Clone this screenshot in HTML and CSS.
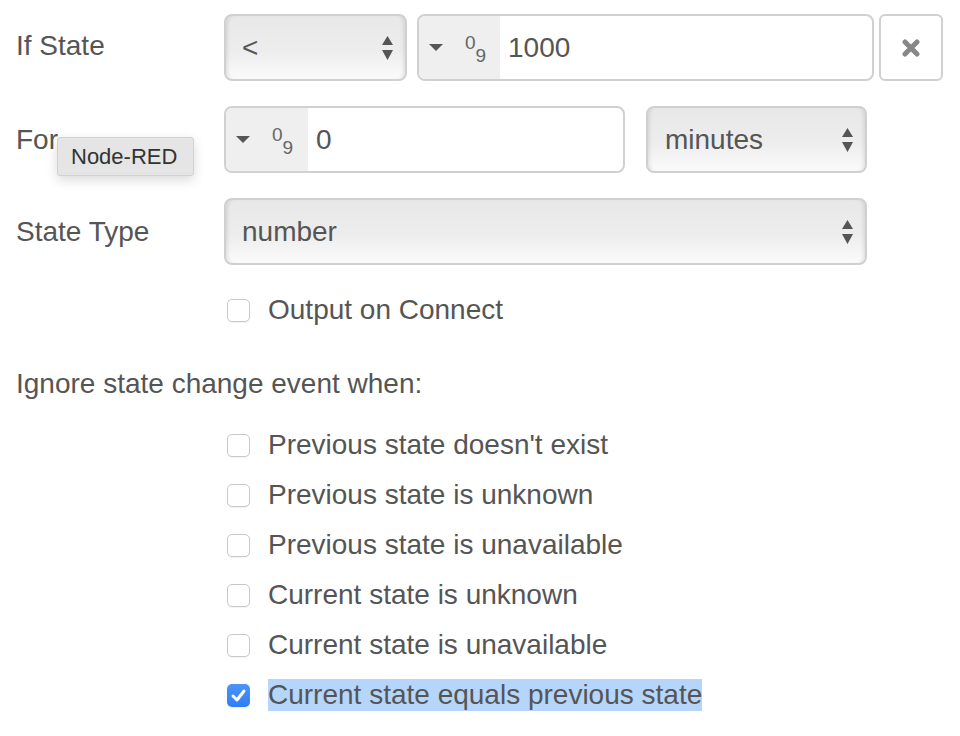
FILE: index.html
```html
<!DOCTYPE html>
<html lang="en">
<head>
    <meta charset="UTF-8">
    <title>Trigger State</title>
    <link rel="stylesheet" href="styles.css">
</head>
<body>
    <div class="form-row">
        <label class="label-if">If State</label>
        <div class="select select-op">
            <span>&lt;</span>
            <svg class="arrows" width="11" height="24" viewBox="0 0 11 24"><path d="M5.5 0 L11 9 L0 9 Z M0 14 L11 14 L5.5 24 Z"/></svg>
        </div>
        <div class="typed typed-state">
            <div class="type-btn">
                <svg class="caret" width="14" height="7" viewBox="0 0 14 7"><path d="M0 0 L14 0 L7 7 Z"/></svg>
                <span class="num-icon"><sup>0</sup><sub>9</sub></span>
            </div>
            <span class="value">1000</span>
        </div>
        <div class="remove-btn">
            <svg width="18" height="18" viewBox="0 0 18 18"><path d="M3 3 L15 15 M15 3 L3 15"/></svg>
        </div>
    </div>

    <div class="form-row">
        <label>For</label>
        <div class="typed typed-for">
            <div class="type-btn">
                <svg class="caret" width="14" height="7" viewBox="0 0 14 7"><path d="M0 0 L14 0 L7 7 Z"/></svg>
                <span class="num-icon"><sup>0</sup><sub>9</sub></span>
            </div>
            <span class="value">0</span>
        </div>
        <div class="select select-units">
            <span>minutes</span>
            <svg class="arrows" width="11" height="24" viewBox="0 0 11 24"><path d="M5.5 0 L11 9 L0 9 Z M0 14 L11 14 L5.5 24 Z"/></svg>
        </div>
        <div class="tooltip">Node-RED</div>
    </div>

    <div class="form-row">
        <label>State Type</label>
        <div class="select select-type">
            <span>number</span>
            <svg class="arrows" width="11" height="24" viewBox="0 0 11 24"><path d="M5.5 0 L11 9 L0 9 Z M0 14 L11 14 L5.5 24 Z"/></svg>
        </div>
    </div>

    <div class="check-row connect-row">
        <span class="checkbox"></span>
        <span>Output on Connect</span>
    </div>

    <div class="ignore-title">Ignore state change event when:</div>

    <div class="check-list">
        <div class="check-row"><span class="checkbox"></span><span>Previous state doesn't exist</span></div>
        <div class="check-row"><span class="checkbox"></span><span>Previous state is unknown</span></div>
        <div class="check-row"><span class="checkbox"></span><span>Previous state is unavailable</span></div>
        <div class="check-row"><span class="checkbox"></span><span>Current state is unknown</span></div>
        <div class="check-row"><span class="checkbox"></span><span>Current state is unavailable</span></div>
        <div class="check-row">
            <span class="checkbox checked">
                <svg width="23" height="23" viewBox="0 0 23 23"><path d="M6 12 L10 16 L17 7"/></svg>
            </span>
            <span class="selected">Current state equals previous state</span>
        </div>
    </div>
</body>
</html>
```

FILE: styles.css
```css
body {
    margin: 0;
    padding: 14px 16px;
    font-family: "Liberation Sans", Arial, sans-serif;
    font-size: 28px;
    color: #555;
    background-color: #fff;
}

.form-row {
    position: relative;
    display: flex;
    align-items: center;
    height: 67px;
    margin-bottom: 25px;
}

.form-row > label {
    width: 208px;
    flex: none;
}

.form-row > .label-if {
    margin-top: -3px;
}

.select {
    box-sizing: border-box;
    height: 67px;
    display: flex;
    align-items: center;
    justify-content: space-between;
    padding: 0 12px 0 16px;
    border: 2px solid #d0d0d0;
    border-radius: 8px;
    background: linear-gradient(#e8e8e8, #ededed 55%, #fbfbfb);
    box-shadow: inset 4px 0 4px -3px rgba(0, 0, 0, 0.12), inset -4px 0 4px -3px rgba(0, 0, 0, 0.12);
}

.arrows path {
    fill: #555;
}

.select-op {
    width: 183px;
}

.select-units {
    width: 221px;
    margin-left: 21px;
    padding-left: 17px;
}

.select-type {
    width: 643px;
}

.typed {
    box-sizing: border-box;
    height: 67px;
    display: flex;
    align-items: center;
    border: 2px solid #d0d0d0;
    border-radius: 8px;
    overflow: hidden;
    background-color: #fff;
}

.typed-state {
    width: 457px;
    margin-left: 10px;
}

.typed-for {
    width: 401px;
}

.type-btn {
    align-self: stretch;
    width: 81px;
    flex: none;
    display: flex;
    align-items: center;
    padding-left: 10px;
    box-sizing: border-box;
    background-color: #efefef;
}

.typed-for .type-btn {
    width: 82px;
}

.caret path {
    fill: #555;
}

.num-icon {
    margin-left: 22px;
    font-size: 19px;
    color: #666;
    display: flex;
    align-items: flex-start;
    height: 30px;
}

.num-icon sup,
.num-icon sub {
    font-size: inherit;
    vertical-align: baseline;
    line-height: 1;
}

.num-icon sub {
    margin-top: 13px;
}

.value {
    margin-left: 8px;
}

.remove-btn {
    box-sizing: border-box;
    width: 64px;
    height: 67px;
    margin-left: 5px;
    border: 2px solid #d0d0d0;
    border-radius: 6px;
    display: flex;
    align-items: center;
    justify-content: center;
}

.remove-btn path {
    stroke: #888;
    stroke-width: 5;
    stroke-linecap: round;
}

.tooltip {
    position: absolute;
    left: 41px;
    top: 31px;
    box-sizing: border-box;
    width: 137px;
    height: 39px;
    padding-left: 13px;
    line-height: 37px;
    font-size: 22px;
    color: #333;
    background-color: #e5e5e5;
    border: 1px solid #d2d2d2;
    border-radius: 3px;
    box-shadow: 0 4px 12px rgba(0, 0, 0, 0.15);
}

.check-row {
    display: flex;
    align-items: center;
    height: 50px;
    padding-left: 227px;
    margin-left: -16px;
}

.connect-row {
    height: 40px;
}

.checkbox {
    box-sizing: border-box;
    width: 23px;
    height: 23px;
    margin-right: 18px;
    border: 1px solid #c9c9c9;
    border-radius: 5px;
    background-color: #fff;
    box-shadow: 0 1px 1px rgba(0, 0, 0, 0.05);
    flex: none;
}

.checkbox.checked {
    border: none;
    background: linear-gradient(#4b95f9, #2f7df6);
}

.checkbox.checked svg {
    display: block;
}

.checkbox.checked path {
    fill: none;
    stroke: #fff;
    stroke-width: 3;
    stroke-linecap: round;
    stroke-linejoin: round;
}

.selected {
    line-height: normal;
    background-color: #b6d5fb;
}

.ignore-title {
    height: 40px;
    line-height: 40px;
    margin-top: 34px;
}

.check-list {
    margin-top: 16px;
}
```
